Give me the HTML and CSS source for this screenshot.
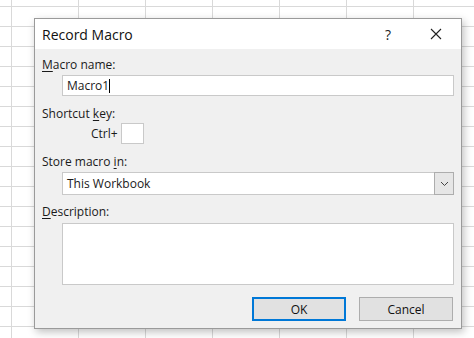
FILE: index.html
```html
<!DOCTYPE html>
<html lang="en">
<head>
  <meta charset="UTF-8">
  <title>Record Macro</title>
  <link rel="stylesheet" href="styles.css">
</head>
<body>
  <div class="dialog">
    <div class="titlebar">
      <span class="title">Record Macro</span>
      <span class="help">?</span>
      <svg class="close" width="12" height="12" viewBox="0 0 12 12">
        <path d="M1 1 L11 11 M11 1 L1 11" stroke="#222" stroke-width="1.1" fill="none"/>
      </svg>
    </div>
    <div class="content">
      <label class="label"><u>M</u>acro name:</label>
      <div class="field name-field">Macro1<span class="caret"></span></div>

      <label class="label">Shortcut <u>k</u>ey:</label>
      <div class="shortcut">
        <span>Ctrl+</span>
        <div class="key-box"></div>
      </div>

      <label class="label">Store macro <u>i</u>n:</label>
      <div class="field select-field">
        <span class="select-text">This Workbook</span>
        <span class="drop-btn">
          <svg width="9" height="6" viewBox="0 0 9 6"><path d="M1 1 L4.5 4.5 L8 1" stroke="#444" stroke-width="1" fill="none"/></svg>
        </span>
      </div>

      <label class="label"><u>D</u>escription:</label>
      <div class="field desc-field"></div>

      <div class="buttons">
        <button class="btn btn-default">OK</button>
        <button class="btn">Cancel</button>
      </div>
    </div>
  </div>
</body>
</html>
```

FILE: styles.css
```css
body {
  margin: 0;
  height: 338px;
  overflow: hidden;
  font-family: 'Open Sans', 'Noto Sans', sans-serif;
  font-size: 12px;
  color: #1a1a1a;
  background-color: #ffffff;
  background-image:
    linear-gradient(to right, #d9d9d9 1px, transparent 1px),
    linear-gradient(to bottom, #d9d9d9 1px, transparent 1px);
  background-size: 67px 20px;
  background-position: 11px 6px;
  padding: 18px 0 0 34px;
  box-sizing: border-box;
}
u {
  text-decoration: underline;
  text-underline-offset: 2px;
}
.dialog {
  width: 428px;
  height: 311px;
  box-sizing: border-box;
  border: 1px solid #9a9a9a;
  background: #f0f0f0;
  box-shadow: 2px 3px 8px rgba(0, 0, 0, 0.25);
  display: flex;
  flex-direction: column;
}
.titlebar {
  height: 30px;
  background: #ffffff;
  display: flex;
  align-items: center;
  padding: 0 0 0 7px;
}
.title {
  flex: 1;
  font-size: 14px;
  color: #111;
}
.help {
  font-size: 14px;
  color: #222;
  width: 20px;
  text-align: center;
  margin-right: 32px;
}
.close {
  margin: 0 19px 0 0;
}
.content {
  flex: 1;
  padding: 8px 7px 0 7px;
  display: flex;
  flex-direction: column;
}
.label {
  display: block;
  line-height: 16px;
  margin: 0 0 2px;
}
.field {
  margin-left: 20px;
  width: 392px;
  box-sizing: border-box;
  background: #fff;
  border: 1px solid #c9c9c9;
}
.name-field {
  height: 21px;
  line-height: 19px;
  padding-left: 4px;
  margin-bottom: 10px;
  font-size: 12px;
}
.caret {
  display: inline-block;
  width: 1px;
  height: 14px;
  background: #000;
  vertical-align: -3px;
}
.shortcut {
  display: flex;
  align-items: center;
  gap: 3px;
  margin: -1px 0 10px 49px;
}
.key-box {
  width: 23px;
  height: 21px;
  box-sizing: border-box;
  background: #fff;
  border: 1px solid #c9c9c9;
}
.select-field {
  height: 23px;
  display: flex;
  align-items: stretch;
  margin-bottom: 9px;
}
.select-text {
  flex: 1;
  line-height: 21px;
  padding-left: 4px;
}
.drop-btn {
  width: 18px;
  background: #e6e6e6;
  border: 1px solid #adadad;
  margin: -1px -1px -1px 0;
  display: flex;
  align-items: center;
  justify-content: center;
}
.desc-field {
  height: 62px;
  margin-top: 1px;
}
.buttons {
  display: flex;
  justify-content: flex-end;
  gap: 13px;
  margin: 12px 1px 0 0;
}
.btn {
  width: 94px;
  height: 24px;
  font-family: inherit;
  font-size: 12px;
  color: #111;
  background: #e1e1e1;
  border: 1px solid #adadad;
  padding: 0;
}
.btn-default {
  border: 2px solid #0078d7;
}
```
